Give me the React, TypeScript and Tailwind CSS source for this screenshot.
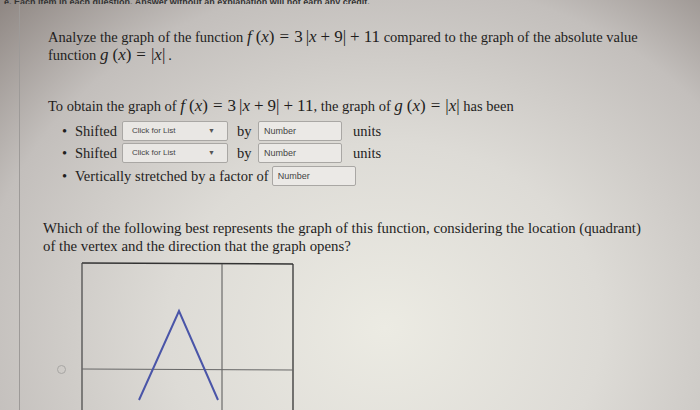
import React from 'react';

function V({ children }: { children: React.ReactNode }) {
  return <i>{children}</i>;
}

function Op({ children, wide }: { children: React.ReactNode; wide?: boolean }) {
  return <span className={wide ? 'mx-[5px]' : 'mx-[4px]'}>{children}</span>;
}

function FofX() {
  return (
    <span className="whitespace-nowrap text-[17px] leading-[18px]">
      <V>f</V>
      <span className="ml-[4px]">(</span>
      <V>x</V>)<Op wide>=</Op>3<span className="ml-[3px]">|</span>
      <V>x</V>
      <Op>+</Op>9|<Op>+</Op>11
    </span>
  );
}

function GofX() {
  return (
    <span className="whitespace-nowrap text-[17px] leading-[18px]">
      <V>g</V>
      <span className="ml-[4px]">(</span>
      <V>x</V>)<Op wide>=</Op>|<V>x</V>|
    </span>
  );
}

function Select() {
  return (
    <div className="flex h-[20px] w-[106px] items-center justify-between rounded-[2px] border border-[#a9a7a4] bg-[#e9e7e4] pl-[9px] pr-[12px] font-['Liberation_Sans',sans-serif] text-[8px] text-[#444]">
      <span>Click for List</span>
      <span className="text-[7px] text-[#555]">▼</span>
    </div>
  );
}

function NumberBox() {
  return (
    <div className="flex h-[20px] w-[84px] items-center rounded-[2px] border border-[#a9a7a4] bg-[#ebe9e6] pl-[5px] font-['Liberation_Sans',sans-serif] text-[9px] text-[#444]">
      Number
    </div>
  );
}

function ShiftRow() {
  return (
    <div className="flex h-[20px] items-center">
      <span className="w-[13px]">•</span>
      <span className="w-[47px]">Shifted</span>
      <Select />
      <span className="ml-[9px] w-[21px]">by</span>
      <NumberBox />
      <span className="ml-[11px]">units</span>
    </div>
  );
}

export default function App() {
  return (
    <div className="relative h-[410px] w-[700px] overflow-hidden bg-[radial-gradient(ellipse_at_55%_80%,#ecebe3_0%,#dddbd6_40%,#c3bfbc_75%,#8e8682_100%)] font-['Liberation_Serif',serif] text-[14.5px] leading-[18px] text-[#1f1e1d]">
      <div className="-mt-[7px] h-[11px] overflow-hidden whitespace-nowrap pl-[4px] font-['Liberation_Sans',sans-serif] text-[9px] font-bold text-[#333]">
        e. Each item in each question. Answer without an explanation will not earn any credit.
      </div>
      <div className="ml-[19px] h-[420px] border-l border-[#9d9a98] pl-[28px]">
        <div className="pt-[24px]">
          Analyze the graph of the function <FofX /> compared to the graph of the absolute value
          <br />
          function <GofX />
          <span className="ml-[3px]">.</span>
        </div>

        <div className="pt-[33px]">
          To obtain the graph of <FofX />, the graph of <GofX /> has been
        </div>

        <div className="mt-[6px] flex flex-col gap-[2px] pl-[14px]">
          <ShiftRow />
          <ShiftRow />
          <div className="flex h-[22px] items-center">
            <span className="w-[13px]">•</span>
            <span className="mr-[3px]">Vertically stretched by a factor of</span>
            <NumberBox />
          </div>
        </div>

        <div className="-ml-[5px] pt-[32px] text-[14.8px]">
          Which of the following best represents the graph of this function, considering the location (quadrant)
          <br />
          of the vertex and the direction that the graph opens?
        </div>

        <div className="mt-[7px] ml-[9px] flex items-start">
          <div className="mt-[103px] h-[9px] w-[9px] rounded-full border border-[#a8a6a4]" />
          <svg width="216" height="150" viewBox="0 0 216 150" className="ml-[15px]">
            <line x1="1" y1="1" x2="212" y2="2" stroke="#333" strokeWidth="1.5" />
            <line x1="1" y1="1" x2="1" y2="150" stroke="#444" strokeWidth="1.2" />
            <line x1="212" y1="2" x2="212" y2="150" stroke="#333" strokeWidth="1.3" />
            <line x1="141" y1="2" x2="141" y2="150" stroke="#555" strokeWidth="1" />
            <line x1="1" y1="107" x2="212" y2="108" stroke="#666" strokeWidth="1" />
            <polyline points="58,138 98,49 137,138" fill="none" stroke="#4a55a8" strokeWidth="2" />
          </svg>
        </div>
      </div>
    </div>
  );
}
